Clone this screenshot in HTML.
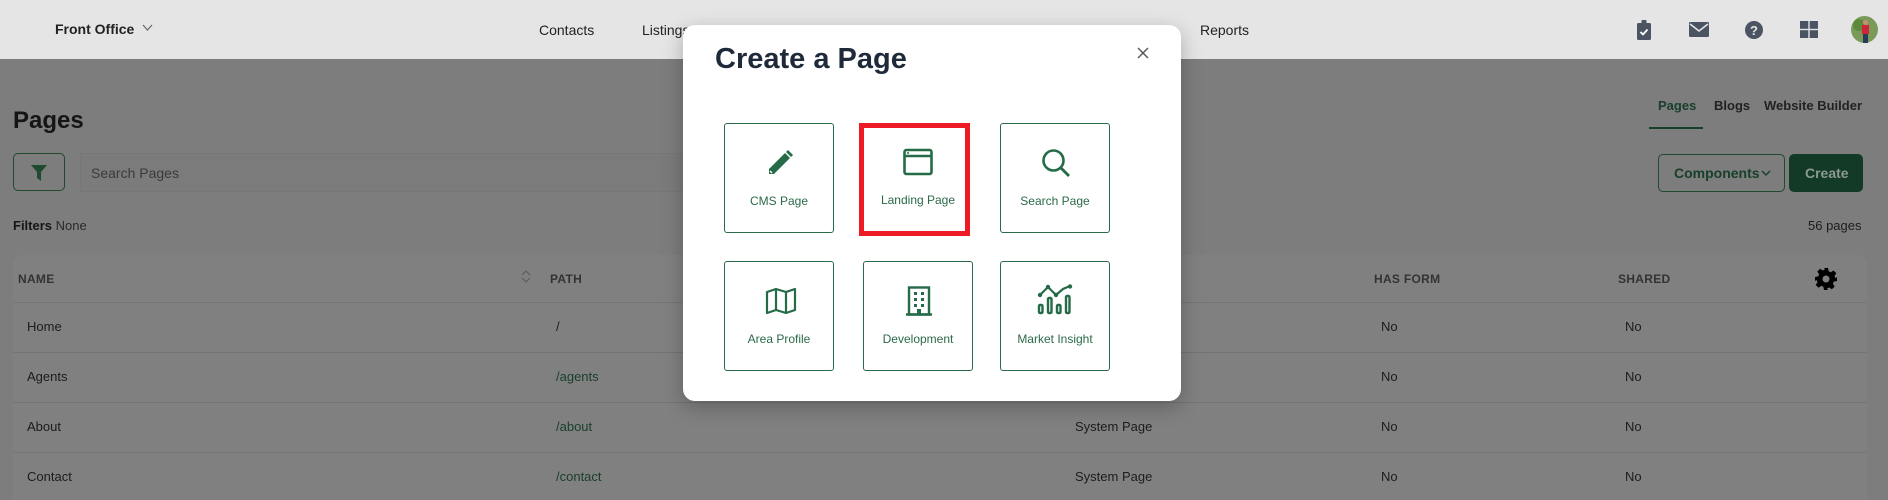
<!DOCTYPE html>
<html style="overflow:hidden;width:1888px;height:500px"><head><meta charset="utf-8"><style>
*{box-sizing:border-box;margin:0;padding:0}
body{width:1888px;height:500px;overflow:hidden;position:relative;font-family:"Liberation Sans",sans-serif;background:#7c7d7c;color:#1c1c1c}
.a{position:absolute;white-space:nowrap}
.hdr{position:absolute;left:0;top:0;width:1888px;height:59px;background:#e5e5e5}
.nav{font-size:14px;color:#222;top:22px}
.card{position:absolute;left:13px;top:255px;width:1854px;height:245px;background:#808080;border-radius:8px 8px 0 0}
.row{position:absolute;left:13px;width:1854px;height:1px;background:#747474}
.th{font-size:12px;color:#333;top:272px;font-weight:bold;letter-spacing:.3px}
.td{font-size:13px;color:#1c1c1c}
.modal{position:absolute;left:683px;top:25px;width:498px;height:376px;background:#fff;border-radius:12px;box-shadow:0 6px 20px rgba(0,0,0,.25)}
.tile{position:absolute;width:110px;height:110px;border:1px solid #2b6a49;border-radius:3px;background:#fff;text-align:center}
.tile svg{position:absolute;left:40px;top:24px}
.tile span{position:absolute;left:0;right:0;top:70px;font-size:12px;color:#2b6a49}
</style></head><body>
<div class="hdr"></div>
<div class="a" style="left:55px;top:21px;font-size:14px;font-weight:bold;color:#222">Front Office</div>
<svg class="a" style="left:142px;top:24px" width="11" height="8" viewBox="0 0 11 8"><path d="M1 1l4.5 5L10 1" fill="none" stroke="#666" stroke-width="1.2"/></svg>
<div class="a nav" style="left:539px">Contacts</div>
<div class="a nav" style="left:642px">Listings</div>
<div class="a nav" style="left:1200px">Reports</div>
<svg class="a" style="left:1636px;top:19px" width="16" height="22" viewBox="0 0 16 22"><rect x="1" y="4" width="14" height="17" rx="1.5" fill="#4a5462"/><rect x="5.5" y="1" width="5" height="5" rx="1" fill="#4a5462"/><path d="M4.5 13l2.5 2.5 4.5-5" fill="none" stroke="#fff" stroke-width="1.8"/></svg>
<svg class="a" style="left:1689px;top:22px" width="20" height="15" viewBox="0 0 20 15"><rect x="0" y="0" width="20" height="15" rx="1.5" fill="#4a5462"/><path d="M1 2l9 7 9-7" fill="none" stroke="#e5e5e5" stroke-width="1.6"/></svg>
<svg class="a" style="left:1745px;top:21px" width="18" height="18" viewBox="0 0 18 18"><circle cx="9" cy="9" r="9" fill="#4a5462"/><text x="9" y="14" font-size="13" font-weight="bold" text-anchor="middle" fill="#e5e5e5" font-family="Liberation Sans">?</text></svg>
<svg class="a" style="left:1800px;top:21px" width="18" height="17" viewBox="0 0 18 17"><rect x="0" y="0" width="8.3" height="7.8" fill="#4a5462"/><rect x="9.7" y="0" width="8.3" height="7.8" fill="#4a5462"/><rect x="0" y="9.2" width="8.3" height="7.8" fill="#4a5462"/><rect x="9.7" y="9.2" width="8.3" height="7.8" fill="#4a5462"/></svg>
<svg class="a" style="left:1851px;top:16px" width="27" height="27" viewBox="0 0 27 27"><circle cx="13.5" cy="13.5" r="13.5" fill="#7a9a5a"/><circle cx="8" cy="9" r="6" fill="#5c8a3a"/><rect x="11" y="9" width="7" height="9" fill="#d0243a"/><circle cx="14.5" cy="6.5" r="2.5" fill="#c89070"/><rect x="12" y="18" width="5" height="9" fill="#2a3a5a"/></svg>

<div class="a" style="left:13px;top:107px;font-size:24px;font-weight:bold;color:#151515">Pages</div>
<div class="a" style="left:13px;top:153px;width:52px;height:38px;border:1.5px solid #1f4a32;border-radius:5px"></div>
<svg class="a" style="left:31px;top:165px" width="16" height="16" viewBox="0 0 16 16"><path d="M0 0h16L10 7v9L6 13V7z" fill="#1e4a30"/></svg>
<div class="a" style="left:80px;top:153px;width:1000px;height:39px;background:#7a7b7a;border:1px solid #767776"></div>
<div class="a" style="left:91px;top:165px;font-size:14px;color:#3a3a3a">Search Pages</div>
<div class="a" style="left:13px;top:218px;font-size:13px;color:#151515;font-weight:bold">Filters <span style="font-weight:normal;color:#2a2a2a">None</span></div>
<div class="a" style="left:1658px;top:98px;font-size:13px;font-weight:bold;color:#173f2a">Pages</div>
<div class="a" style="left:1649px;top:127px;width:54px;height:2px;background:#173f2a"></div>
<div class="a" style="left:1714px;top:98px;font-size:13px;font-weight:bold;color:#222">Blogs</div>
<div class="a" style="left:1764px;top:98px;font-size:13px;font-weight:bold;color:#222">Website Builder</div>
<div class="a" style="left:1658px;top:154px;width:127px;height:38px;border:1px solid #1f4a32;border-radius:5px"></div>
<div class="a" style="left:1674px;top:165px;font-size:14px;font-weight:bold;color:#173f2a">Components</div>
<svg class="a" style="left:1761px;top:170px" width="10" height="7" viewBox="0 0 10 7"><path d="M1 1l4 4 4-4" fill="none" stroke="#173f2a" stroke-width="1.4"/></svg>
<div class="a" style="left:1789px;top:154px;width:74px;height:38px;background:#133a26;border-radius:5px"></div>
<div class="a" style="left:1805px;top:165px;font-size:14px;font-weight:bold;color:#8a9a90">Create</div>
<div class="a" style="left:1808px;top:218px;font-size:13px;color:#1c1c1c">56 pages</div>

<div class="card"></div>
<div class="row" style="top:302px"></div>
<div class="row" style="top:352px"></div>
<div class="row" style="top:402px"></div>
<div class="row" style="top:452px"></div>
<div class="a th" style="left:18px">NAME</div>
<svg class="a" style="left:521px;top:269px" width="10" height="15" viewBox="0 0 10 15"><path d="M1 6l4-4 4 4M1 9l4 4 4-4" fill="none" stroke="#5a5a5a" stroke-width="1"/></svg>
<div class="a th" style="left:550px">PATH</div>
<div class="a th" style="left:1374px">HAS FORM</div>
<div class="a th" style="left:1618px">SHARED</div>
<svg class="a" style="left:1814px;top:267px" width="24" height="24" viewBox="0 0 24 24"><path fill="#000" d="M10 1h4l.6 3.2 2.2 1.1 2.7-1.8 2.8 2.8-1.8 2.7.9 2.2L23 10v4l-3.2.6-.9 2.2 1.8 2.7-2.8 2.8-2.7-1.8-2.2.9L14 23h-4l-.6-3.2-2.2-.9-2.7 1.8-2.8-2.8 1.8-2.7-.9-2.2L1 14v-4l3.2-.6.9-2.2-1.8-2.7 2.8-2.8 2.7 1.8 2.2-1.1zM12 8.5a3.5 3.5 0 1 0 0 7 3.5 3.5 0 0 0 0-7z"/></svg>
<div class="a td" style="left:27px;top:319px">Home</div><div class="a td" style="left:556px;top:319px">/</div>
<div class="a td" style="left:1381px;top:319px">No</div><div class="a td" style="left:1625px;top:319px">No</div>
<div class="a td" style="left:27px;top:369px">Agents</div><div class="a td" style="left:556px;top:369px;color:#173f2a">/agents</div>
<div class="a td" style="left:1381px;top:369px">No</div><div class="a td" style="left:1625px;top:369px">No</div>
<div class="a td" style="left:27px;top:419px">About</div><div class="a td" style="left:556px;top:419px;color:#173f2a">/about</div>
<div class="a td" style="left:1075px;top:419px">System Page</div>
<div class="a td" style="left:1381px;top:419px">No</div><div class="a td" style="left:1625px;top:419px">No</div>
<div class="a td" style="left:27px;top:469px">Contact</div><div class="a td" style="left:556px;top:469px;color:#173f2a">/contact</div>
<div class="a td" style="left:1075px;top:469px">System Page</div>
<div class="a td" style="left:1381px;top:469px">No</div><div class="a td" style="left:1625px;top:469px">No</div>

<div class="modal"></div>
<div class="a" style="left:715px;top:43px;font-size:29px;font-weight:bold;color:#1e2a3a">Create a Page</div>
<svg class="a" style="left:1137px;top:47px" width="12" height="12" viewBox="0 0 12 12"><path d="M1 1l10 10M11 1L1 11" stroke="#555" stroke-width="1.4"/></svg>

<div class="tile" style="left:724px;top:123px"><svg width="30" height="30" viewBox="0 0 30 30"><path d="M4 21L20 5l5 5L9 26H4z" fill="#256b47"/><path d="M21 4l2-2 5 5-2 2z" fill="#256b47"/><path d="M5 23l2 2" stroke="#fff" stroke-width="1.5"/></svg><span>CMS Page</span></div>
<div class="tile" style="left:863px;top:123px;border:none"><svg width="30" height="30" viewBox="0 0 30 30"><rect x="1.5" y="3" width="27" height="24" rx="2" fill="none" stroke="#256b47" stroke-width="2.6"/><path d="M1.5 9h27" stroke="#256b47" stroke-width="2.4"/><circle cx="5" cy="6" r="1" fill="#256b47"/></svg><span>Landing Page</span></div>
<div class="a" style="left:859px;top:123px;width:111px;height:113px;border:5px solid #ed1c24"></div>
<div class="tile" style="left:1000px;top:123px"><svg width="30" height="30" viewBox="0 0 30 30"><circle cx="12.5" cy="12.5" r="10" fill="none" stroke="#256b47" stroke-width="2.6"/><path d="M20 20l8 8" stroke="#256b47" stroke-width="2.8"/></svg><span>Search Page</span></div>
<div class="tile" style="left:724px;top:261px"><svg width="32" height="30" viewBox="0 0 32 30"><path d="M2 6l9-3 10 3 9-3v21l-9 3-10-3-9 3z M11 3v21 M21 6v21" fill="none" stroke="#256b47" stroke-width="2.2" stroke-linejoin="round"/></svg><span>Area Profile</span></div>
<div class="tile" style="left:863px;top:261px"><svg width="30" height="30" viewBox="0 0 30 30"><rect x="5" y="1.5" width="20" height="27" fill="none" stroke="#256b47" stroke-width="2.4"/><path d="M2 28.5h26" stroke="#256b47" stroke-width="2.4"/><g fill="#256b47"><rect x="10" y="6" width="3" height="3"/><rect x="17" y="6" width="3" height="3"/><rect x="10" y="12" width="3" height="3"/><rect x="17" y="12" width="3" height="3"/><rect x="10" y="18" width="3" height="3"/><rect x="17" y="18" width="3" height="3"/><rect x="13" y="23" width="4" height="5"/></g></svg><span>Development</span></div>
<div class="tile" style="left:1000px;top:261px"><svg width="38" height="32" viewBox="0 0 38 32" style="left:36px;top:22px"><path d="M3 11l8-8 8 8 7-6 7-3" fill="none" stroke="#256b47" stroke-width="2.2"/><g fill="#256b47"><circle cx="3" cy="11" r="2.2"/><circle cx="11" cy="3" r="2.2"/><circle cx="19" cy="11" r="2.2"/><circle cx="33" cy="2.5" r="2.2"/></g><g fill="none" stroke="#256b47" stroke-width="2.4"><rect x="2" y="21" width="3.5" height="8" rx="1"/><rect x="11" y="14" width="3.5" height="15" rx="1"/><rect x="20" y="21" width="3.5" height="8" rx="1"/><rect x="29" y="12" width="3.5" height="17" rx="1"/></g></svg><span>Market Insight</span></div>
</body></html>
